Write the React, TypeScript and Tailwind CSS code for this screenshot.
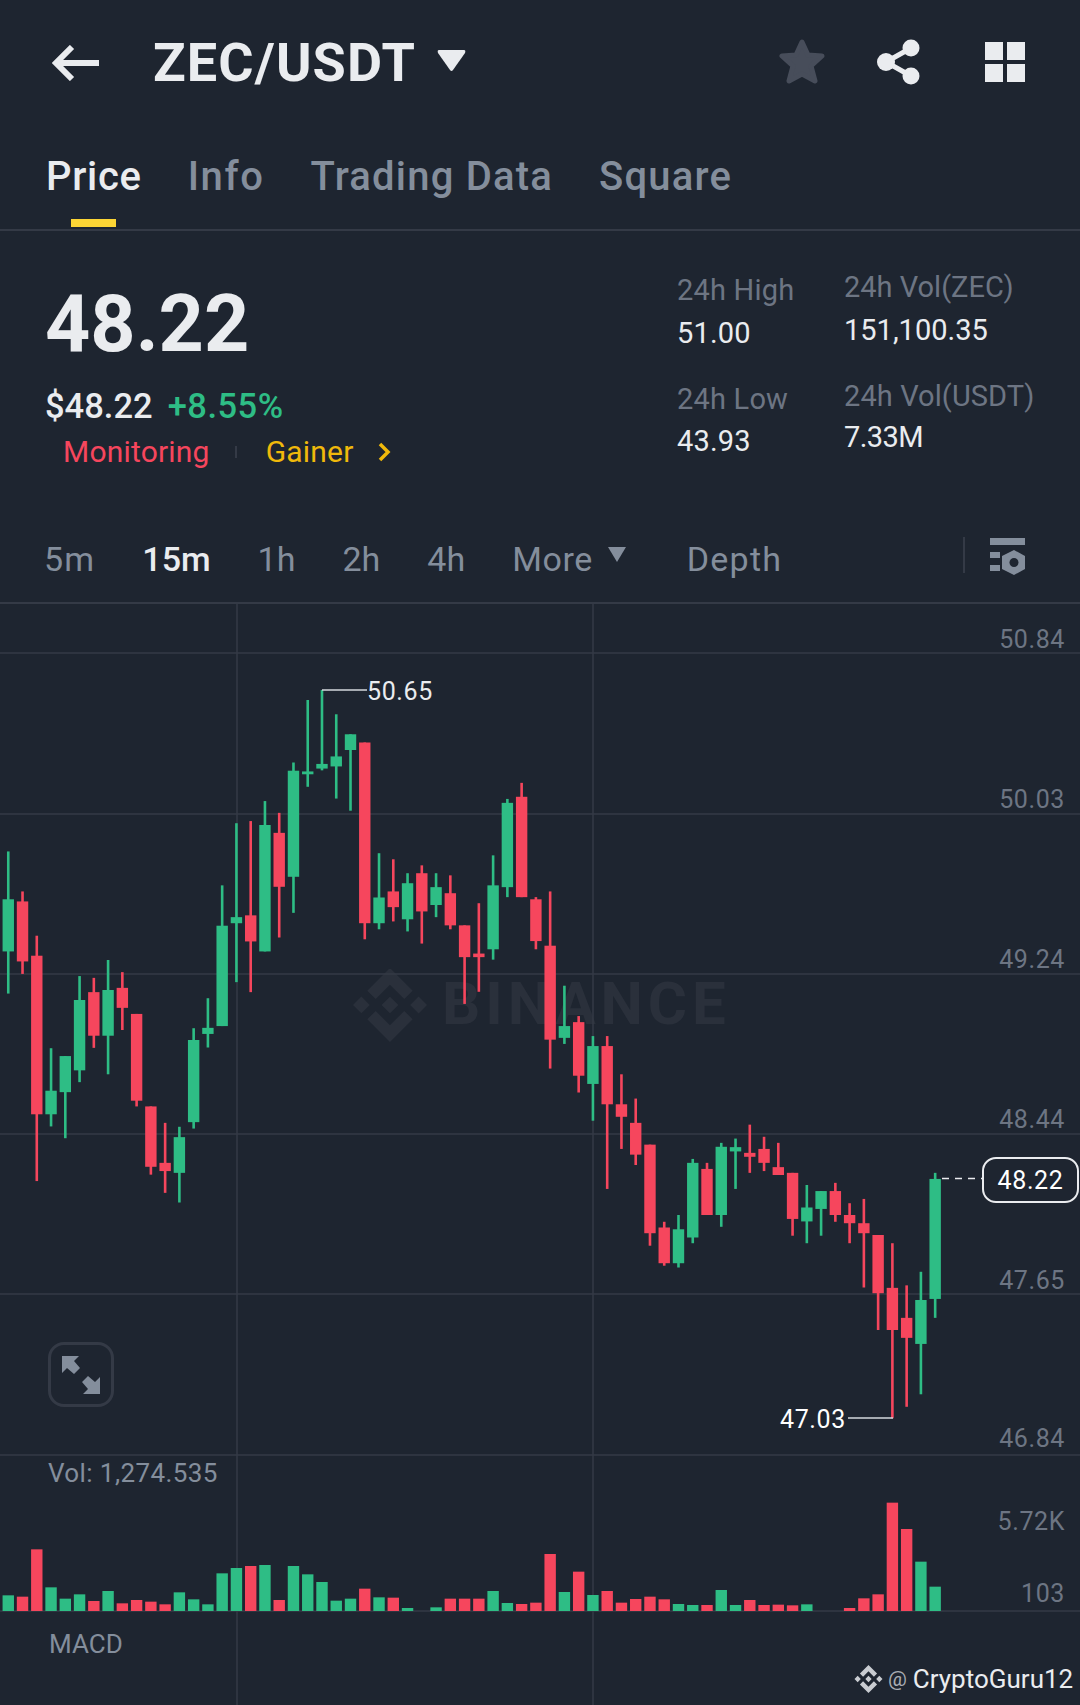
import React from "react";

// candles: [colour, wick top, body top, body bottom, wick bottom], y in chart units (page y = 640 + u / 2.8)
type Candle = ["g" | "r", number, number, number, number];
const candles: Candle[] = [
  ["g", 592, 726, 872, 990], ["r", 704, 732, 900, 935], ["r", 828, 884, 1328, 1515], ["g", 1143, 1262, 1328, 1362],
  ["g", 1165, 1165, 1266, 1395], ["g", 941, 1008, 1205, 1238], ["r", 946, 986, 1108, 1142], ["g", 896, 980, 1108, 1216],
  ["r", 930, 974, 1030, 1092], ["r", 1047, 1047, 1290, 1306], ["r", 1306, 1306, 1475, 1497], ["r", 1352, 1464, 1487, 1548],
  ["g", 1363, 1392, 1492, 1575], ["g", 1087, 1120, 1350, 1368], ["g", 1003, 1086, 1103, 1141], ["g", 687, 800, 1081, 1081],
  ["g", 513, 776, 793, 958], ["r", 507, 771, 844, 986], ["g", 451, 518, 872, 872], ["r", 484, 540, 691, 833],
  ["g", 343, 366, 663, 764], ["g", 168, 368, 376, 411], ["g", 140, 347, 360, 365], ["g", 208, 326, 354, 444],
  ["g", 264, 264, 308, 478], ["r", 287, 287, 793, 838], ["g", 597, 721, 793, 810], ["r", 614, 704, 748, 788],
  ["g", 653, 681, 782, 816], ["r", 631, 653, 760, 850], ["g", 653, 692, 742, 776], ["r", 659, 709, 799, 810],
  ["r", 799, 799, 888, 1019], ["r", 737, 878, 888, 985], ["g", 603, 687, 866, 895], ["g", 445, 456, 692, 720],
  ["r", 400, 439, 720, 720], ["r", 720, 726, 843, 866], ["r", 704, 856, 1119, 1200], ["g", 968, 1081, 1114, 1131],
  ["r", 1053, 1070, 1220, 1267], ["g", 1109, 1137, 1243, 1346], ["r", 1109, 1137, 1300, 1537], ["r", 1216, 1300, 1335, 1425],
  ["r", 1284, 1352, 1441, 1470], ["r", 1413, 1413, 1661, 1696], ["r", 1629, 1645, 1745, 1752], ["g", 1610, 1650, 1745, 1757],
  ["g", 1453, 1464, 1673, 1689], ["r", 1464, 1481, 1610, 1610], ["g", 1408, 1419, 1610, 1643], ["g", 1396, 1420, 1432, 1537],
  ["r", 1357, 1436, 1447, 1492], ["r", 1391, 1425, 1464, 1487], ["r", 1408, 1476, 1498, 1498], ["r", 1492, 1492, 1621, 1668],
  ["g", 1526, 1589, 1628, 1689], ["g", 1543, 1543, 1593, 1668], ["r", 1520, 1543, 1610, 1629], ["r", 1577, 1610, 1633, 1689],
  ["r", 1565, 1633, 1661, 1813], ["r", 1666, 1666, 1829, 1932], ["r", 1689, 1814, 1932, 2179], ["r", 1807, 1898, 1954, 2147],
  ["g", 1769, 1848, 1971, 2112], ["g", 1492, 1509, 1845, 1898],
];

// volume bars: [colour, top], page y = 1200 + top / 3
const tops: ["g" | "r", number][] = [
  ["g", 1186], ["r", 1190], ["r", 1048], ["g", 1162], ["g", 1196], ["g", 1183], ["r", 1203], ["g", 1173], ["r", 1210], ["r", 1200],
  ["r", 1205], ["r", 1213], ["g", 1177], ["g", 1198], ["g", 1213], ["g", 1120], ["g", 1104], ["r", 1098], ["g", 1095], ["r", 1200],
  ["g", 1098], ["g", 1123], ["g", 1146], ["g", 1202], ["g", 1196], ["r", 1166], ["g", 1192], ["r", 1193], ["g", 1224], ["g", 1233],
  ["g", 1222], ["r", 1196], ["r", 1196], ["r", 1196], ["g", 1173], ["g", 1209], ["r", 1212], ["r", 1208], ["r", 1062], ["g", 1176],
  ["r", 1115], ["g", 1185], ["r", 1173], ["r", 1208], ["r", 1197], ["r", 1190], ["r", 1198], ["g", 1212], ["g", 1215], ["r", 1215],
  ["g", 1170], ["g", 1215], ["r", 1200], ["r", 1215], ["r", 1214], ["r", 1216], ["g", 1213], ["g", 1233], ["g", 1233], ["r", 1224],
  ["r", 1195], ["r", 1183], ["r", 908], ["r", 987], ["g", 1085], ["g", 1160],
];

const GREEN = "#2ebd85";
const RED = "#f6465d";
const toY = (u: number) => 640 + u / 2.8;
const toX = (i: number) => 8.27 + 14.26 * i;

const BINANCE =
  "M16.624 13.9202l2.7175 2.7154-7.353 7.353-7.353-7.352 2.7175-2.7164 4.6355 4.6595 4.6356-4.6595zm4.6366-4.6366L24 12l-2.7154 2.7164L18.5682 12l2.6924-2.7164zm-9.272.001l2.7163 2.6914-2.7164 2.7174v-.001L9.2721 12l2.7164-2.7154zm-9.2722-.001L5.4088 12l-2.6914 2.6924L0 12l2.7164-2.7164zM11.9885.0115l7.353 7.329-2.7174 2.7154-4.6356-4.6356-4.6355 4.6595-2.7174-2.7154 7.353-7.353z";

function Chart() {
  return (
    <svg className="relative block w-full h-[1101px]" viewBox="0 604 1080 1101">
      <g stroke="#343a46" strokeWidth="1.5">
        {[653, 814, 974, 1134, 1294, 1455, 1611].map((y) => (
          <line key={y} x1="0" x2="1080" y1={y} y2={y} />
        ))}
        <line x1="237" x2="237" y1="604" y2="1705" />
        <line x1="593" x2="593" y1="604" y2="1705" />
      </g>
      {candles.map(([c, wt, bt, bb, wb], i) => {
        const x = toX(i);
        const fill = c === "g" ? GREEN : RED;
        return (
          <g key={i} fill={fill}>
            <rect x={x - 1.3} width="2.6" y={toY(wt)} height={toY(wb) - toY(wt)} />
            <rect x={x - 5.7} width="11.4" y={toY(bt)} height={Math.max(toY(bb) - toY(bt), 2)} />
          </g>
        );
      })}
      {tops.map(([c, top], i) => {
        const y = 1200 + top / 3;
        return <rect key={i} x={toX(i) - 5.7} width="11.4" y={y} height={1611 - y} fill={c === "g" ? GREEN : RED} />;
      })}
      <g fill="none" stroke="#d5d8dc" strokeWidth="1.6">
        <path d="M322 690H367" />
        <path d="M848 1418H893" />
      </g>
      <path d="M942 1178.5H982" stroke="#eaecef" strokeWidth="1.6" strokeDasharray="7 6" />
    </svg>
  );
}

function PriceLabel({ text, top }: { text: string; top: string }) {
  return <div className={`absolute right-[15px] ${top} text-[25px] leading-[30px] tracking-[0.6px] text-[#6d7583]`}>{text}</div>;
}

export default function App() {
  return (
    <div className="w-[1080px] h-[1705px] overflow-hidden bg-[#1e2530] [font-family:Roboto,sans-serif] text-[#eaecef]">
      <header className="h-[126px] flex items-center pl-[52px] pr-[55px]">
        <svg width="47" height="36" viewBox="0 0 47 36" fill="none" stroke="#eaecef" strokeWidth="6">
          <path d="M47 18H5" />
          <path d="M20 2L4 18L20 34" />
        </svg>
        <div className="ml-[54px] text-[54px] leading-[60px] font-bold tracking-[1.1px]">ZEC/USDT</div>
        <svg className="ml-[21px] -mt-[5px]" width="29" height="22" viewBox="0 0 29 22" fill="#eaecef">
          <path d="M2 0H27Q29 0 28 3L16 20Q14.500 22 13 20L1 3Q0 0 2 0Z" />
        </svg>
        <svg className="ml-auto -mt-[2px]" width="46" height="46" viewBox="0 0 46 46" fill="#474d5a" stroke="#474d5a" strokeWidth="5" strokeLinejoin="round">
          <path d="M23 3L29 16L43 17L32 27L36 42L23 35L10 42L14 27L3 17L17 16Z" />
        </svg>
        <svg className="ml-[52px] -mt-[2px]" width="43" height="46" viewBox="0 0 43 46" fill="#eaecef" stroke="#eaecef">
          <path d="M34 9L9 23L34 37" fill="none" strokeWidth="5" />
          <circle cx="34" cy="9" r="8.500" strokeWidth="0" />
          <circle cx="9" cy="23" r="9" strokeWidth="0" />
          <circle cx="34" cy="37" r="8.500" strokeWidth="0" />
        </svg>
        <svg className="ml-[65px] -mt-[2px]" width="40" height="40" viewBox="0 0 40 40" fill="#eaecef">
          <rect width="18" height="18" />
          <rect x="22" width="18" height="18" />
          <rect y="22" width="18" height="18" />
          <rect x="22" y="22" width="18" height="18" />
        </svg>
      </header>

      <nav className="h-[105px] border-b-2 border-[#343a46] pt-[27px]">
        <div className="flex gap-[46px] pl-[46px] text-[40px] leading-[48px] font-medium text-[#848e9c]">
          <div className="tracking-[0.7px] text-[#eaecef]">Price</div>
          <div className="tracking-[1.6px]">Info</div>
          <div className="tracking-[1.2px]">Trading Data</div>
          <div className="tracking-[1.2px]">Square</div>
        </div>
        <div className="ml-[71px] mt-[18px] w-[45px] h-[8px] bg-[#fcd535]" />
      </nav>

      <section className="h-[285px] flex">
        <div className="w-[677px] pl-[45px] pt-[53px]">
          <div className="text-[79px] leading-[80px] font-bold">48.22</div>
          <div className="mt-[22px] flex gap-[15px] text-[34.500px] leading-[40px] font-medium">
            <span>$48.22</span>
            <span className="tracking-[0.5px] text-[#2ebd85]">+8.55%</span>
          </div>
          <div className="mt-[8px] pl-[18px] flex items-center text-[30px] leading-[36px] tracking-[0.2px]">
            <span className="text-[#f6465d]">Monitoring</span>
            <span className="ml-[25px] w-[2px] h-[12px] bg-[#343a46]" />
            <span className="ml-[29px] text-[#f0b90b]">Gainer</span>
            <svg className="ml-[23px]" width="14" height="20" viewBox="0 0 14 20" fill="none" stroke="#f0b90b" strokeWidth="3.500">
              <path d="M3 2L11 10L3 18" />
            </svg>
          </div>
        </div>
        <div className="w-[167px] pt-[42px] text-[29px] leading-[34px] tracking-[0.2px]">
          <div className="text-[#6d7583]">24h High</div>
          <div className="mt-[9px]">51.00</div>
          <div className="mt-[32px] text-[#6d7583]">24h Low</div>
          <div className="mt-[8px]">43.93</div>
        </div>
        <div className="pt-[39px] text-[29px] leading-[34px]">
          <div className="text-[#6d7583]">24h Vol(ZEC)</div>
          <div className="mt-[9px]">151,100.35</div>
          <div className="mt-[32px] text-[#6d7583] tracking-[0.1px]">24h Vol(USDT)</div>
          <div className="mt-[7px] tracking-[-0.6px]">7.33M</div>
        </div>
      </section>

      <div className="h-[88px] border-b-2 border-[#343a46] flex items-center pl-[44px] pr-[54px] text-[34px] leading-[40px] text-[#848e9c]">
        <div className="flex items-center gap-[47px]">
          <span className="tracking-[1.2px]">5m</span>
          <span className="font-medium text-[#eaecef]">15m</span>
          <span>1h</span>
          <span>2h</span>
          <span>4h</span>
          <span className="flex items-center tracking-[0.6px]">
            More
            <svg className="ml-[14px] -mt-[10px]" width="20" height="15" viewBox="0 0 20 15" fill="#848e9c">
              <path d="M1 0H19L10 15Z" />
            </svg>
          </span>
        </div>
        <span className="ml-[60px] tracking-[1.2px]">Depth</span>
        <span className="ml-auto w-[2px] h-[36px] bg-[#343a46] -mt-[8px]" />
        <svg className="ml-[25px] -mt-[6px]" width="36" height="37" viewBox="0 0 36 37" fill="#848e9c">
          <rect width="35" height="7" />
          <rect y="14" width="10" height="6" />
          <rect y="27" width="10" height="6" />
          <path d="M24 12L35 18V31L24 37L12 31V18Z" />
          <circle cx="24" cy="24.500" r="4.500" fill="#1e2530" />
        </svg>
      </div>

      <main className="relative h-[1101px]">
        <div className="absolute left-[442px] top-[364px] text-[60px] leading-[72px] font-bold tracking-[4.900px] text-[#2a303b]">BINANCE</div>
        <svg className="absolute left-[353px] top-[364px]" width="74" height="74" viewBox="0 0 24 24" fill="#2a303b">
          <path d={BINANCE} />
        </svg>
        <Chart />
        <PriceLabel text="50.84" top="top-[21px]" />
        <PriceLabel text="50.03" top="top-[181px]" />
        <PriceLabel text="49.24" top="top-[341px]" />
        <PriceLabel text="48.44" top="top-[501px]" />
        <PriceLabel text="47.65" top="top-[662px]" />
        <PriceLabel text="46.84" top="top-[820px]" />
        <PriceLabel text="5.72K" top="top-[903px]" />
        <PriceLabel text="103" top="top-[975px]" />

        <div className="absolute left-[367px] top-[73px] text-[25px] leading-[30px] tracking-[0.6px] text-[#eaecef]">50.65</div>
        <div className="absolute left-[780px] top-[801px] text-[25px] leading-[30px] tracking-[0.6px] text-white">47.03</div>
        <div className="absolute left-[982px] top-[553px] w-[97px] h-[46px] border-2 border-[#eaecef] rounded-[14px] bg-[#1e2530] flex items-center justify-center pt-[1px] text-[25px] tracking-[0.6px] text-white">
          48.22
        </div>

        <div className="absolute left-[48px] top-[738px] w-[66px] h-[65px] border-[3px] border-[#343a46] rounded-[16px] flex items-center justify-center">
          <svg width="38" height="38" viewBox="0 0 38 38" fill="#848e9c">
            <path d="M0 0H17L12 5L18 12L12 18L5 12L0 17Z" />
            <path d="M38 38H21L26 33L20 26L26 20L33 26L38 21Z" />
          </svg>
        </div>
        <div className="absolute left-[48px] top-[854px] text-[26px] leading-[30px] tracking-[0.4px] text-[#848e9c]">Vol: 1,274.535</div>
        <div className="absolute left-[49px] top-[1025px] text-[26px] leading-[30px] text-[#848e9c]">MACD</div>

        <div className="absolute left-[854px] top-[1060px] flex items-center text-[26px] leading-[30px] text-[#eaecef]">
          <svg width="29" height="28" viewBox="0 0 24 24" fill="#c9ccd1">
            <path d={BINANCE} />
          </svg>
          <span className="ml-[5px] text-[21px] text-[#a9adb3]">@</span>
          <span className="ml-[6px]">CryptoGuru12</span>
        </div>
      </main>
    </div>
  );
}
